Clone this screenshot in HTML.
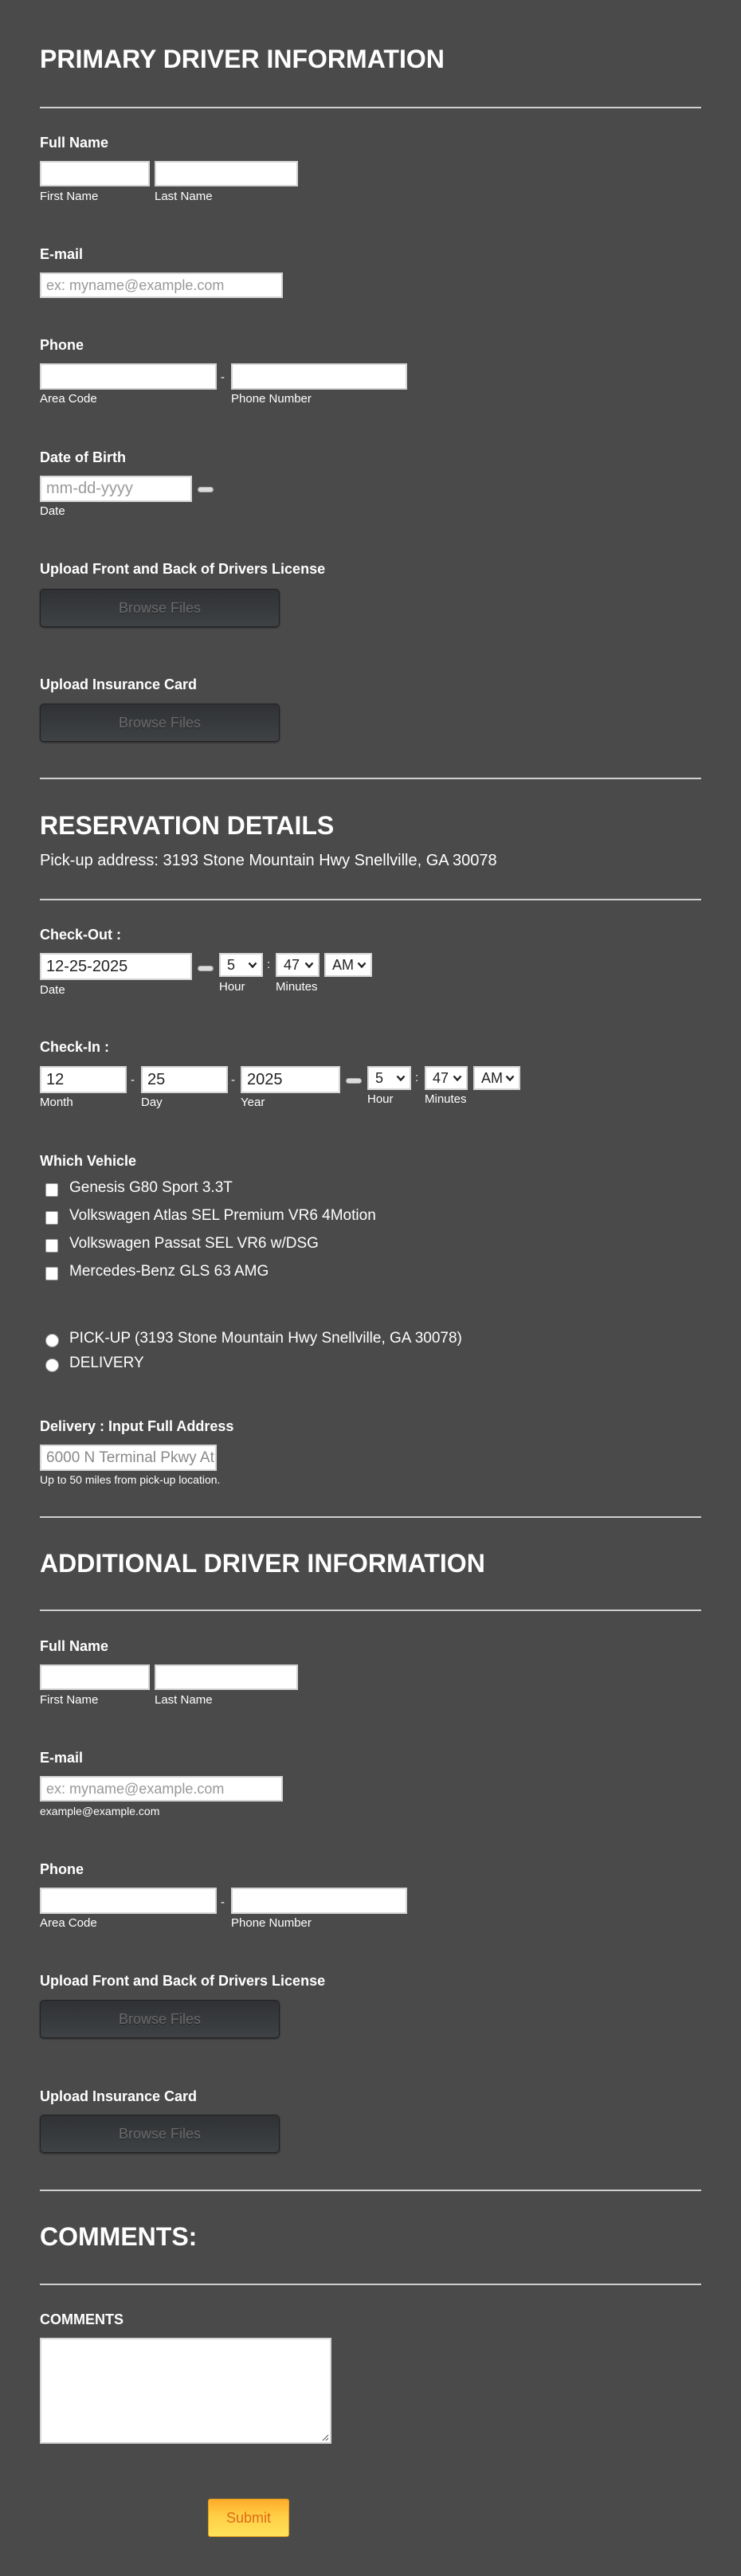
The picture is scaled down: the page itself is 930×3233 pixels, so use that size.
<!DOCTYPE html>
<html><head><meta charset="utf-8"><style>
*{box-sizing:border-box;margin:0;padding:0}
html,body{width:930px;height:3233px;background:#4a4a4a;overflow:hidden}
body{position:relative;font-family:"Liberation Sans",Arial,sans-serif;color:#fff}
.a{position:absolute;line-height:1;white-space:nowrap}
.h1{font-size:32px;font-weight:bold}
.lb{font-size:18px;font-weight:bold}
.sb{font-size:15px}
.hr{position:absolute;left:50px;width:830px;height:2px;background:#cfcfcf}
.in{position:absolute;background:#fff;border:2px solid #d6d6d6;color:#999;font-size:18px;line-height:28px;padding-left:6px;white-space:nowrap;overflow:hidden}
.val{color:#222;font-size:20px}
.sel{position:absolute;background:#fff;border:2px solid #d6d6d6;color:#222;font-size:18px;height:30px;line-height:26px;padding-left:8px}
.sel svg{position:absolute;right:5px;top:9px}
.pill{position:absolute;width:20px;height:7px;border-radius:4px;background:#dcdcdc;border:1px solid #aaa}
.btn{position:absolute;left:50px;width:301px;height:48px;border-radius:5px;border:1px solid #222;background:linear-gradient(#2f3134,#3f4245);box-shadow:0 1px 2px rgba(0,0,0,.5);color:#6a6a6a;font-size:18px;text-align:center;line-height:46px;text-shadow:0 1px 0 #222}
.cb{position:absolute;left:57px;width:16px;height:17px;background:#fff;border:1px solid #999;border-radius:2px}
.rd{position:absolute;left:57px;width:17px;height:17px;background:#fff;border:1px solid #999;border-radius:50%}
.ck{font-size:19px;left:87px}
</style></head><body>

<div class="a h1" style="left:50px;top:58px">PRIMARY DRIVER INFORMATION</div>
<div class="hr" style="top:134px"></div>

<div class="a lb" style="left:50px;top:170px">Full Name</div>
<div class="in" style="left:50px;top:202px;width:138px;height:32px"></div>
<div class="in" style="left:194px;top:202px;width:180px;height:32px"></div>
<div class="a sb" style="left:50px;top:239px">First Name</div>
<div class="a sb" style="left:194px;top:239px">Last Name</div>

<div class="a lb" style="left:50px;top:310px">E-mail</div>
<div class="in" style="left:50px;top:342px;width:305px;height:32px">ex: myname@example.com</div>

<div class="a lb" style="left:50px;top:424px">Phone</div>
<div class="in" style="left:50px;top:456px;width:222px;height:33px"></div>
<div class="a sb" style="left:277px;top:466px">-</div>
<div class="in" style="left:290px;top:456px;width:221px;height:33px"></div>
<div class="a sb" style="left:50px;top:493px">Area Code</div>
<div class="a sb" style="left:290px;top:493px">Phone Number</div>

<div class="a lb" style="left:50px;top:565px">Date of Birth</div>
<div class="in" style="left:50px;top:597px;width:191px;height:33px;font-size:20px;line-height:29px">mm-dd-yyyy</div>
<div class="pill" style="left:248px;top:611px"></div>
<div class="a sb" style="left:50px;top:634px">Date</div>

<div class="a lb" style="left:50px;top:705px">Upload Front and Back of Drivers License</div>
<div class="btn" style="top:739px">Browse Files</div>
<div class="a lb" style="left:50px;top:850px">Upload Insurance Card</div>
<div class="btn" style="top:883px">Browse Files</div>

<div class="hr" style="top:976px"></div>
<div class="a h1" style="left:50px;top:1020px">RESERVATION DETAILS</div>
<div class="a" style="left:50px;top:1070px;font-size:20px">Pick-up address: 3193 Stone Mountain Hwy Snellville, GA 30078</div>
<div class="hr" style="top:1128px"></div>

<div class="a lb" style="left:50px;top:1164px">Check-Out :</div>
<div class="in val" style="left:50px;top:1196px;width:191px;height:34px;line-height:30px">12-25-2025</div>
<div class="pill" style="left:248px;top:1212px"></div>
<div class="sel" style="left:275px;top:1196px;width:55px">5<svg width="12" height="9" viewBox="0 0 12 9"><path d="M1.5 1.5 6 6.5 10.5 1.5" fill="none" stroke="#222" stroke-width="2.4"/></svg></div>
<div class="a sb" style="left:335px;top:1203px">:</div>
<div class="sel" style="left:346px;top:1196px;width:55px">47<svg width="12" height="9" viewBox="0 0 12 9"><path d="M1.5 1.5 6 6.5 10.5 1.5" fill="none" stroke="#222" stroke-width="2.4"/></svg></div>
<div class="sel" style="left:407px;top:1196px;width:60px">AM<svg width="12" height="9" viewBox="0 0 12 9"><path d="M1.5 1.5 6 6.5 10.5 1.5" fill="none" stroke="#222" stroke-width="2.4"/></svg></div>
<div class="a sb" style="left:50px;top:1235px">Date</div>
<div class="a sb" style="left:275px;top:1231px">Hour</div>
<div class="a sb" style="left:346px;top:1231px">Minutes</div>

<div class="a lb" style="left:50px;top:1305px">Check-In :</div>
<div class="in val" style="left:50px;top:1338px;width:109px;height:34px;line-height:30px">12</div>
<div class="a sb" style="left:164px;top:1348px">-</div>
<div class="in val" style="left:177px;top:1338px;width:109px;height:34px;line-height:30px">25</div>
<div class="a sb" style="left:290px;top:1348px">-</div>
<div class="in val" style="left:302px;top:1338px;width:125px;height:34px;line-height:30px">2025</div>
<div class="pill" style="left:434px;top:1353px"></div>
<div class="sel" style="left:461px;top:1338px;width:55px">5<svg width="12" height="9" viewBox="0 0 12 9"><path d="M1.5 1.5 6 6.5 10.5 1.5" fill="none" stroke="#222" stroke-width="2.4"/></svg></div>
<div class="a sb" style="left:521px;top:1345px">:</div>
<div class="sel" style="left:533px;top:1338px;width:54px">47<svg width="12" height="9" viewBox="0 0 12 9"><path d="M1.5 1.5 6 6.5 10.5 1.5" fill="none" stroke="#222" stroke-width="2.4"/></svg></div>
<div class="sel" style="left:594px;top:1338px;width:59px">AM<svg width="12" height="9" viewBox="0 0 12 9"><path d="M1.5 1.5 6 6.5 10.5 1.5" fill="none" stroke="#222" stroke-width="2.4"/></svg></div>
<div class="a sb" style="left:50px;top:1376px">Month</div>
<div class="a sb" style="left:177px;top:1376px">Day</div>
<div class="a sb" style="left:302px;top:1376px">Year</div>
<div class="a sb" style="left:461px;top:1372px">Hour</div>
<div class="a sb" style="left:533px;top:1372px">Minutes</div>

<div class="a lb" style="left:50px;top:1448px">Which Vehicle</div>
<div class="cb" style="top:1485px"></div><div class="a ck" style="top:1481px">Genesis G80 Sport 3.3T</div>
<div class="cb" style="top:1520px"></div><div class="a ck" style="top:1516px">Volkswagen Atlas SEL Premium VR6 4Motion</div>
<div class="cb" style="top:1555px"></div><div class="a ck" style="top:1551px">Volkswagen Passat SEL VR6 w/DSG</div>
<div class="cb" style="top:1590px"></div><div class="a ck" style="top:1586px">Mercedes-Benz GLS 63 AMG</div>

<div class="rd" style="top:1674px"></div><div class="a ck" style="top:1670px">PICK-UP (3193 Stone Mountain Hwy Snellville, GA 30078)</div>
<div class="rd" style="top:1705px"></div><div class="a ck" style="top:1701px">DELIVERY</div>

<div class="a lb" style="left:50px;top:1781px">Delivery : Input Full Address</div>
<div class="in" style="left:50px;top:1813px;width:222px;height:33px;font-size:19px;line-height:29px;padding-left:6px;color:#8a8a8a">6000 N Terminal Pkwy At</div>
<div class="a" style="left:50px;top:1850px;font-size:14px">Up to 50 miles from pick-up location.</div>

<div class="hr" style="top:1903px"></div>
<div class="a h1" style="left:50px;top:1946px">ADDITIONAL DRIVER INFORMATION</div>
<div class="hr" style="top:2020px"></div>

<div class="a lb" style="left:50px;top:2057px">Full Name</div>
<div class="in" style="left:50px;top:2089px;width:138px;height:32px"></div>
<div class="in" style="left:194px;top:2089px;width:180px;height:32px"></div>
<div class="a sb" style="left:50px;top:2126px">First Name</div>
<div class="a sb" style="left:194px;top:2126px">Last Name</div>

<div class="a lb" style="left:50px;top:2197px">E-mail</div>
<div class="in" style="left:50px;top:2229px;width:305px;height:32px">ex: myname@example.com</div>
<div class="a" style="left:50px;top:2266px;font-size:14px">example@example.com</div>

<div class="a lb" style="left:50px;top:2337px">Phone</div>
<div class="in" style="left:50px;top:2369px;width:222px;height:33px"></div>
<div class="a sb" style="left:277px;top:2380px">-</div>
<div class="in" style="left:290px;top:2369px;width:221px;height:33px"></div>
<div class="a sb" style="left:50px;top:2406px">Area Code</div>
<div class="a sb" style="left:290px;top:2406px">Phone Number</div>

<div class="a lb" style="left:50px;top:2477px">Upload Front and Back of Drivers License</div>
<div class="btn" style="top:2510px">Browse Files</div>
<div class="a lb" style="left:50px;top:2622px">Upload Insurance Card</div>
<div class="btn" style="top:2654px">Browse Files</div>

<div class="hr" style="top:2748px"></div>
<div class="a h1" style="left:50px;top:2791px">COMMENTS:</div>
<div class="hr" style="top:2866px"></div>

<div class="a lb" style="left:50px;top:2902px">COMMENTS</div>
<div class="in" style="left:50px;top:2934px;width:366px;height:133px"><svg style="position:absolute;right:1px;bottom:1px" width="10" height="10" viewBox="0 0 10 10"><path d="M9 2 2 9M9 6 6 9" stroke="#555" stroke-width="1"/></svg></div>

<div style="position:absolute;left:261px;top:3136px;width:102px;height:48px;border-radius:3px;border:1px solid #e39a1a;background:linear-gradient(#ffab2a,#ffcf44 45%,#ffe25a);color:#e0691a;font-size:18px;text-align:center;line-height:46px">Submit</div>

</body></html>
